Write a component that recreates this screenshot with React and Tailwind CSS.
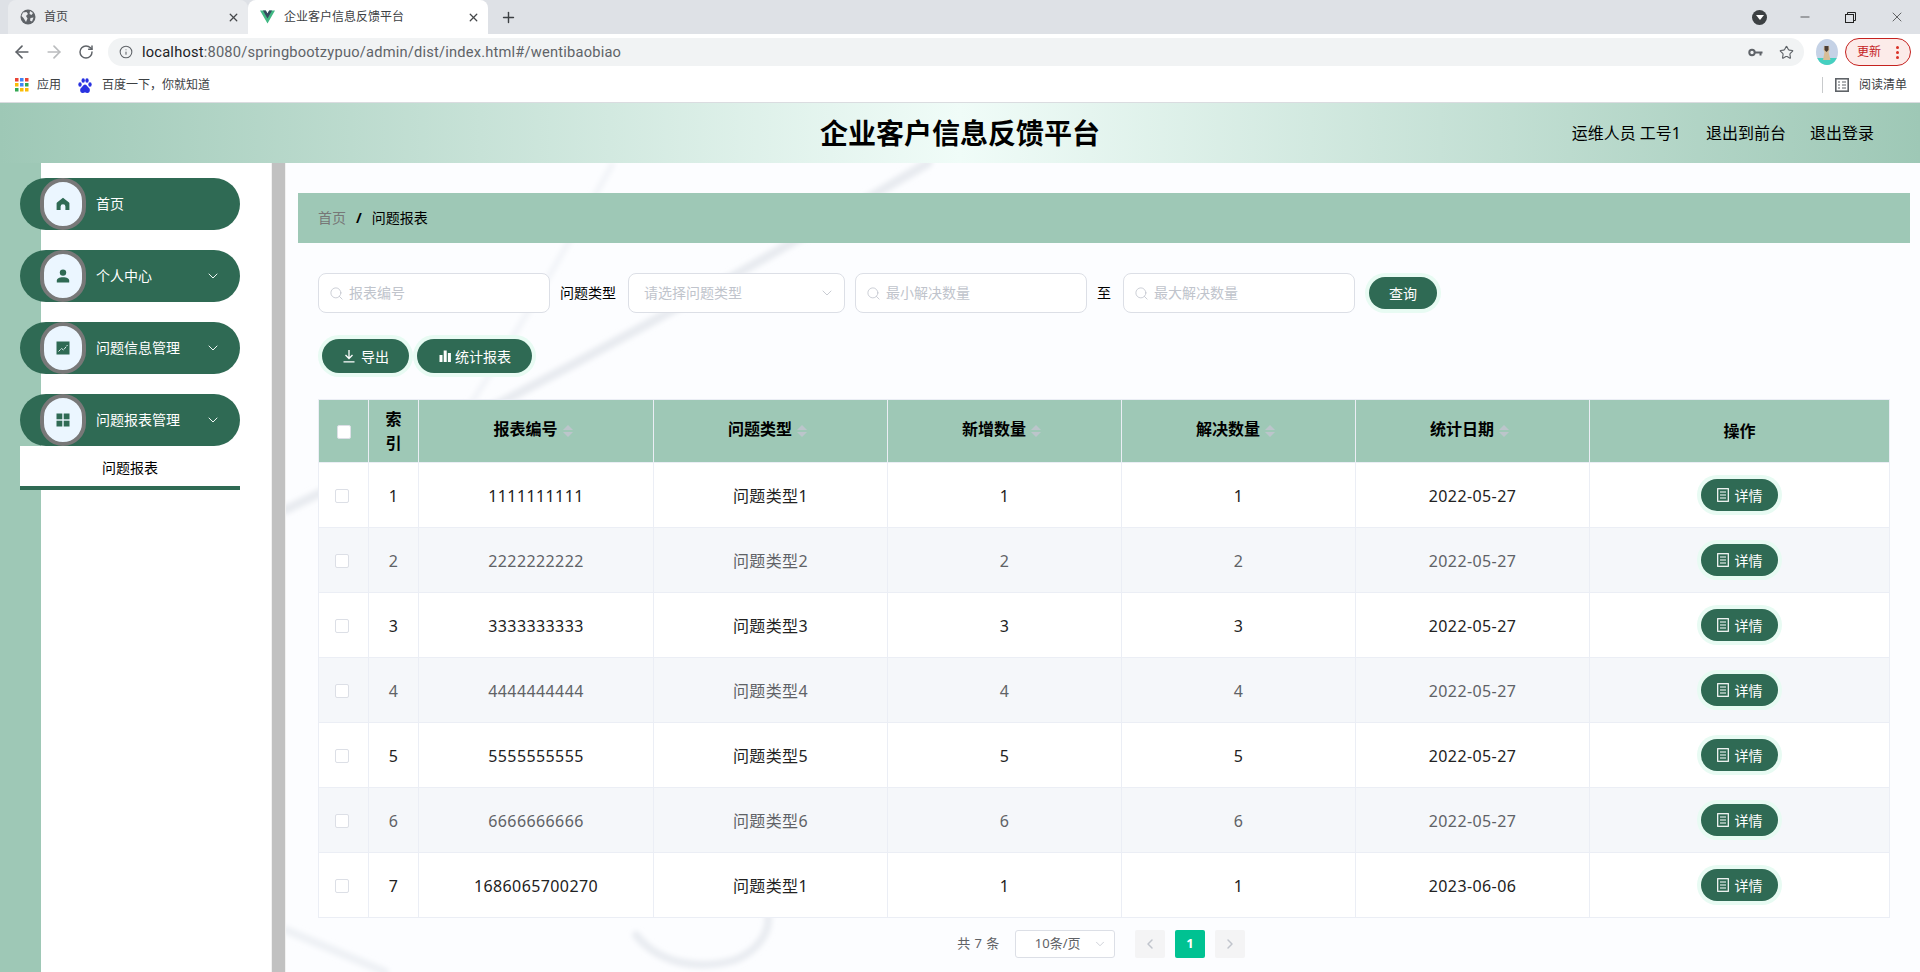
import React from "react";
import { ArrowLeft, ArrowRight, RotateCw, Info, Star, ChevronDown, ChevronLeft, ChevronRight, Search, X, Plus, Minus } from "lucide-react";

const rows = [
  ["1", "1111111111", "问题类型1", "1", "1", "2022-05-27"],
  ["2", "2222222222", "问题类型2", "2", "2", "2022-05-27"],
  ["3", "3333333333", "问题类型3", "3", "3", "2022-05-27"],
  ["4", "4444444444", "问题类型4", "4", "4", "2022-05-27"],
  ["5", "5555555555", "问题类型5", "5", "5", "2022-05-27"],
  ["6", "6666666666", "问题类型6", "6", "6", "2022-05-27"],
  ["7", "1686065700270", "问题类型1", "1", "1", "2023-06-06"],
];

const HomeIcon = () => (
  <svg width="14" height="14" viewBox="0 0 14 14" fill="#2f6a54"><path d="M7 .8 1 5.4a1.2 1.2 0 0 0-.4.9V13h4V9.6a2.4 2.4 0 0 1 4.8 0V13h4V6.3a1.2 1.2 0 0 0-.4-.9z" /></svg>
);
const UserIcon = () => (
  <svg width="14" height="14" viewBox="0 0 14 14" fill="#2f6a54"><circle cx="7" cy="3.6" r="3.2" /><path d="M.8 13.6v-1.8C.8 9.6 3 8.2 7 8.2s6.200 1.400 6.200 3.600v1.800z" /></svg>
);
const ChartIcon = () => (
  <svg width="14" height="14" viewBox="0 0 14 14"><rect x=".5" y=".5" width="13" height="13" fill="#2f6a54" /><path d="M2.500 10.500 5.500 7.500 7.500 9 11.500 4" fill="none" stroke="#dfeef0" strokeWidth="1" strokeDasharray="3 .8" /></svg>
);
const GridIcon = () => (
  <svg width="14" height="14" viewBox="0 0 14 14" fill="#2f6a54"><rect x=".5" y=".5" width="5.800" height="5.800" /><rect x="7.700" y=".5" width="5.800" height="5.800" /><rect x=".5" y="7.700" width="5.800" height="5.800" /><rect x="7.700" y="7.700" width="5.800" height="5.800" /></svg>
);
const DocIcon = () => (
  <svg width="12" height="14" viewBox="0 0 12 14" fill="none" stroke="white" strokeWidth="1.200"><rect x=".7" y=".7" width="10.600" height="12.600" /><path d="M3 4h6M3 7h6M3 10h6" /></svg>
);
const DownloadIcon = () => (
  <svg width="14" height="14" viewBox="0 0 14 14" fill="none" stroke="white" strokeWidth="1.300"><path d="M7 1v8.500M3.500 6 7 9.500 10.500 6M1.500 12.800h11" /></svg>
);
const BarsIcon = () => (
  <svg width="14" height="14" viewBox="0 0 14 14" fill="white"><rect x="1.500" y="6" width="3" height="7" /><rect x="5.700" y="1.500" width="3" height="11.500" /><rect x="9.900" y="4" width="3" height="9" /></svg>
);
const Globe = () => (
  <svg width="16" height="16" viewBox="0 0 16 16"><circle cx="8" cy="8" r="7.500" fill="#5f6368" /><path d="M3 3.500 6.500 3 8 5 6 7 7.500 9.500 6 13 3.500 9 1.500 7zM10 2l3 2-1.500 2-2-1zM10.500 9l3-.5-1.500 4-2-1z" fill="#e9ebee" /></svg>
);
const Vue = () => (
  <svg width="15" height="14" viewBox="0 0 256 221"><path d="M204.800 0H256L128 220.800 0 0h97.900L128 51.200 157.400 0z" fill="#41b883" /><path d="M50 0 128 134.400 205.800 0h-48.400L128 51.200 97.900 0z" fill="#34495e" /></svg>
);
const Apps = () => (
  <svg width="14" height="14" viewBox="0 0 14 14">
    {[["#ea4335", 0, 0], ["#4285f4", 5, 0], ["#ea4335", 10, 0], ["#fbbc05", 0, 5], ["#4285f4", 5, 5], ["#34a853", 10, 5], ["#34a853", 0, 10], ["#fbbc05", 5, 10], ["#fbbc05", 10, 10]].map(([c, x, y], i) => (
      <rect key={i} x={x} y={y} width="3.500" height="3.500" fill={c} />
    ))}
  </svg>
);
const Paw = () => (
  <svg width="14" height="16" viewBox="0 0 14 16" fill="#2932e1"><ellipse cx="2" cy="6.500" rx="1.700" ry="2.200" /><ellipse cx="5.200" cy="2.500" rx="1.700" ry="2.300" /><ellipse cx="9" cy="2.500" rx="1.700" ry="2.300" /><ellipse cx="12" cy="6.500" rx="1.700" ry="2.200" /><path d="M7 6.500c-2 0-2.500 2.500-4 3.500-1.500 1.200-1 5 1.500 5 1 0 1.500-.5 2.500-.5s1.500.5 2.500.5c2.500 0 3-3.800 1.500-5-1.500-1-2-3.500-4-3.500z" /></svg>
);
const Reader = () => (
  <svg width="14" height="14" viewBox="0 0 14 14" fill="none" stroke="#5f6368"><rect x=".8" y=".8" width="12.400" height="12.400" strokeWidth="1.600" /><path d="M3 4h2M7 4h4M3 7h2M7 7h4M3 10h2M7 10h4" strokeWidth="1.200" /></svg>
);
const Key = () => (
  <svg width="15" height="9" viewBox="0 0 15 9" fill="none"><circle cx="4" cy="4.500" r="2.700" stroke="#5f6368" strokeWidth="2" /><path d="M6.500 3.500H14.500V5.500H13.500V7.500H11.500V5.500H6.500z" fill="#5f6368" /></svg>
);
const Cat = () => (
  <svg width="22" height="26" viewBox="0 0 22 26"><defs><clipPath id="av"><ellipse cx="11" cy="13" rx="11" ry="13" /></clipPath></defs><g clipPath="url(#av)"><rect width="22" height="26" fill="#c5d2e6" /><rect y="19" width="22" height="7" fill="#45d0c0" /><path d="M8 6l1 2h3l1-2 .5 5-1 2 2 8H7l1.500-8-1-2z" fill="#d8bd96" /><path d="M8.500 7h4v4l-2 2-2-2z" fill="#4a3d35" /></g></svg>
);
const Caret = () => (
  <span className="inline-flex flex-col gap-[2px] ml-[5px] align-middle">
    <span className="w-0 h-0 border-x-[5px] border-x-transparent border-b-[5px] border-b-[#bcc5cb]" />
    <span className="w-0 h-0 border-x-[5px] border-x-transparent border-t-[5px] border-t-[#bcc5cb]" />
  </span>
);
const Ring = "bg-[#2f6a54] text-white rounded-full shadow-[0_0_0_4px_#e8fbf3] flex items-center justify-center";

const Tab = ({ icon, title, active }) => (
  <div className={`h-[34px] w-[240px] rounded-t-[8px] flex items-center pl-[12px] pr-[8px] text-[12px] ${active ? "bg-white text-[#3c4043]" : "bg-[#e9ebee] text-[#45474a]"}`}>
    <span className="w-[24px] flex items-center">{icon}</span>
    <span className="flex-1">{title}</span>
    <X size={13} strokeWidth={2.4} className="text-[#45474a]" />
  </div>
);

const SearchInput = ({ placeholder }) => (
  <div className="w-[232px] h-[40px] bg-white border border-[#dcdfe6] rounded-[8px] flex items-center pl-[10px] shrink-0">
    <Search size={15} strokeWidth={1.300} className="text-[#c0c4cc] shrink-0" />
    <input readOnly placeholder={placeholder} className="ml-[5px] mb-[2px] w-[190px] text-[14px] outline-none bg-transparent placeholder:text-[#c0c4cc]" />
  </div>
);

const MenuItem = ({ icon, label, arrow }) => (
  <div className="w-[220px] h-[52px] bg-[#2f6a54] rounded-full flex items-center text-white text-[14px]">
    <span className="ml-[20px] w-[46px] h-[52px] rounded-full border-4 border-[#787878] bg-[#ebf6ff] flex items-center justify-center shrink-0">{icon}</span>
    <span className="ml-[10px] mb-[2px] flex-1">{label}</span>
    {arrow && <ChevronDown size={16} strokeWidth={1.500} className="mr-[19px] text-[#f0f8f5]" />}
  </div>
);

export default function App() {
  return (
    <div className="w-[1920px] h-[972px] overflow-hidden flex flex-col bg-white text-black font-['Noto_Sans','Noto_Sans_CJK_SC',sans-serif]">
      {/* browser tabs */}
      <div className="h-[34px] bg-[#dee1e6] flex items-center pl-[8px] shrink-0">
        <Tab icon={<Globe />} title="首页" />
        <Tab active icon={<Vue />} title="企业客户信息反馈平台" />
        <Plus size={17} strokeWidth={2} className="ml-[12px] text-[#3c4043]" />
        <div className="ml-auto flex items-center text-[#222]">
          <span className="w-[15px] h-[15px] rounded-full bg-[#3c4043] flex items-center justify-center mr-[31px]">
            <span className="w-0 h-0 border-x-[4px] border-x-transparent border-t-[5px] border-t-white" />
          </span>
          <Minus size={14} strokeWidth={1.200} className="mr-[33px]" />
          <svg width="11" height="11" viewBox="0 0 11 11" fill="none" stroke="#222" className="mr-[33px]"><rect x=".5" y="2.500" width="8" height="8" /><path d="M2.500 2.500v-2h8v8h-2" /></svg>
          <X size={16} strokeWidth={1} className="mr-[15px]" />
        </div>
      </div>
      {/* toolbar */}
      <div className="h-[34px] pt-[2px] bg-white flex items-center shrink-0 text-[#5f6368]">
        <ArrowLeft size={20} strokeWidth={2} className="ml-[12px]" />
        <ArrowRight size={20} strokeWidth={2} className="ml-[12px] text-[#babcbe]" />
        <RotateCw size={16} strokeWidth={2.200} className="ml-[14px]" />
        <div className="ml-[14px] w-[1696px] h-[28px] rounded-full bg-[#f1f3f4] flex items-center">
          <Info size={14} strokeWidth={1.800} className="ml-[11px]" />
          <span className="ml-[9px] text-[14.67px] font-['Roboto',sans-serif] tracking-[0.2px]"><span className="text-[#202124]">localhost</span>:8080/springbootzypuo/admin/dist/index.html#/wentibaobiao</span>
          <span className="ml-auto mr-[16px]"><Key /></span>
          <Star size={15} strokeWidth={1.800} className="mr-[10px]" />
        </div>
        <span className="ml-[12px]"><Cat /></span>
        <div className="ml-[7px] w-[66px] h-[28px] rounded-full border border-[#c5221f] bg-[#fcebe9] text-[#c5221f] text-[12px] flex items-center pl-[11px]">
          更新
          <span className="ml-auto mr-[11px] flex flex-col gap-[2px]">
            <span className="w-[3px] h-[3px] rounded-full bg-[#d93025]" />
            <span className="w-[3px] h-[3px] rounded-full bg-[#d93025]" />
            <span className="w-[3px] h-[3px] rounded-full bg-[#d93025]" />
          </span>
        </div>
      </div>
      {/* bookmarks */}
      <div className="h-[35px] bg-white border-b border-[#dadce0] flex items-center pl-[15px] text-[12px] text-[#3c4043] shrink-0">
        <Apps />
        <span className="ml-[8px]">应用</span>
        <span className="ml-[17px] mt-[2px]"><Paw /></span>
        <span className="ml-[10px]">百度一下，你就知道</span>
        <span className="ml-auto w-px h-[16px] bg-[#c8cacc]" />
        <span className="ml-[12px]"><Reader /></span>
        <span className="ml-[10px] mr-[13px]">阅读清单</span>
      </div>
      {/* header */}
      <header className="relative h-[60px] shrink-0 bg-[linear-gradient(90deg,#9ec8b6,#f0fcf8_50%,#9ec8b6)] flex items-center justify-end">
        <h1 className="absolute left-[820px] top-[11px] text-[28px] leading-[38px] font-bold">企业客户信息反馈平台</h1>
        <span className="text-[16px] mr-[25px]">运维人员 工号1</span>
        <span className="text-[16px] mr-[24px]">退出到前台</span>
        <span className="text-[16px] mr-[46px]">退出登录</span>
      </header>
      {/* body */}
      <div className="flex flex-1 min-h-0">
        <aside className="w-[286px] shrink-0 flex bg-[linear-gradient(90deg,#9ec8b6_41px,white_41px)]">
          <nav className="w-[271px] pt-[15px] pl-[20px] flex flex-col gap-[20px]">
            <MenuItem icon={<HomeIcon />} label="首页" />
            <MenuItem icon={<UserIcon />} label="个人中心" arrow />
            <MenuItem icon={<ChartIcon />} label="问题信息管理" arrow />
            <div>
              <MenuItem icon={<GridIcon />} label="问题报表管理" arrow />
              <div className="w-[220px] h-[44px] pt-[2px] bg-white border-b-4 border-[#2f6a54] flex items-center justify-center text-[14px]">问题报表</div>
            </div>
          </nav>
          <div className="w-[15px] bg-[#f1f1f1] flex justify-center"><div className="w-[13px] bg-[#c1c1c1]" /></div>
        </aside>
        <main className="relative flex-1 min-w-0 bg-[#fcfdff] pt-[30px] pl-[12px] pr-[10px]">
          {/* faint background picture */}
          <svg className="absolute inset-0 pointer-events-none" width="1634" height="809" viewBox="286 163 1634 809" fill="none">
            <defs><filter id="bl"><feGaussianBlur stdDeviation="2.600" /></filter></defs>
            <g filter="url(#bl)" strokeLinecap="round">
              <path d="M928 163 C 830 220 600 360 285 510" stroke="#e8ebf0" strokeWidth="9" />
              <path d="M612 165 C 570 240 520 330 460 420" stroke="#f2f4f8" strokeWidth="6" />
              <path d="M636 935 C 660 965 700 970 735 960 C 760 950 770 930 768 915" stroke="#e9ecf1" strokeWidth="8" />
              <path d="M286 930 L 385 972" stroke="#eef1f5" strokeWidth="8" />
            </g>
          </svg>
          <div className="relative">
            <div className="h-[50px] pb-[2px] bg-[#9ec8b6] flex items-center pl-[20px] text-[14px]">
              <span className="text-[#777]">首页</span>
              <span className="mx-[10px] font-bold">/</span>
              <span>问题报表</span>
            </div>
            <div className="px-[20px]">
              <div className="mt-[30px] h-[40px] flex items-center text-[14px]">
                <SearchInput placeholder="报表编号" />
                <span className="ml-[10px] mb-[2px]">问题类型</span>
                <div className="ml-[12px] w-[217px] h-[40px] pb-[2px] bg-white border border-[#dcdfe6] rounded-[8px] flex items-center pl-[15px] text-[#c0c4cc]">
                  请选择问题类型
                  <ChevronDown size={16} strokeWidth={1.300} className="ml-auto mr-[9px] mt-[1px]" />
                </div>
                <div className="ml-[10px]"><SearchInput placeholder="最小解决数量" /></div>
                <span className="mx-[10px] w-[16px] mb-[2px]">至</span>
                <SearchInput placeholder="最大解决数量" />
                <button className={`ml-[14px] w-[68px] h-[32px] text-[14px] ${Ring}`}>查询</button>
              </div>
              <div className="mt-[26px] h-[34px] flex items-center text-[14px]">
                <button className={`ml-[4px] w-[87px] h-[34px] gap-[5px] ${Ring}`}><DownloadIcon />导出</button>
                <button className={`ml-[8px] w-[115px] h-[34px] gap-[3px] ${Ring}`}><BarsIcon />统计报表</button>
              </div>
              <table className="mt-[26px] w-[1572px] table-fixed border-collapse text-[16px] text-center">
                <colgroup>
                  <col className="w-[50px]" /><col className="w-[50px]" /><col className="w-[235px]" /><col className="w-[234px]" /><col className="w-[234px]" /><col className="w-[234px]" /><col className="w-[234px]" /><col />
                </colgroup>
                <thead>
                  <tr className="h-[63px] bg-[#9ec8b6] font-bold">
                    <th className="border border-[#ebeef5] pt-[1px]">
                      <span className="block mx-auto w-[14px] h-[14px] bg-white border border-[#dcdfe6] rounded-[2px]" />
                    </th>
                    <th className="border border-[#ebeef5] leading-[24px]"><span className="block w-[16px] mx-auto">索引</span></th>
                    {["报表编号", "问题类型", "新增数量", "解决数量", "统计日期"].map((t) => (
                      <th key={t} className="border border-[#ebeef5] pr-[6px] pb-[4px]">{t}<Caret /></th>
                    ))}
                    <th className="border border-[#ebeef5]">操作</th>
                  </tr>
                </thead>
                <tbody className="tracking-[0.4px]">
                  {rows.map((r, i) => (
                    <tr key={r[0]} className={`h-[65px] ${i % 2 ? "bg-[#f5f7fa] text-[#606266]" : "bg-white text-[#222]"}`}>
                      <td className="border border-[#ebeef5] pt-[2px] pr-[3px]"><span className="block mx-auto w-[14px] h-[14px] bg-white border border-[#dcdfe6] rounded-[2px]" /></td>
                      {r.map((c, j) => (
                        <td key={j} className="border border-[#ebeef5] pt-[2px]">{c}</td>
                      ))}
                      <td className="border border-[#ebeef5]">
                        <button className={`mx-auto w-[77px] h-[32px] gap-[6px] text-[14px] tracking-normal ${Ring}`}><DocIcon />详情</button>
                      </td>
                    </tr>
                  ))}
                </tbody>
              </table>
              <div className="mt-[12px] flex items-center justify-center pr-[6px] text-[13px] text-[#606266]">
                <span className="tracking-[0.5px]">共 7 条</span>
                <div className="ml-[15px] w-[100px] h-[28px] bg-white border border-[#dcdfe6] rounded-[3px] flex items-center pl-[19px]">
                  10条/页
                  <ChevronDown size={14} strokeWidth={1.300} className="ml-auto mr-[7px] text-[#c0c4cc]" />
                </div>
                <span className="ml-[20px] w-[30px] h-[28px] bg-[#f4f4f5] rounded-[2px] flex items-center justify-center text-[#c0c4cc]"><ChevronLeft size={16} strokeWidth={2.200} /></span>
                <span className="ml-[10px] w-[30px] h-[28px] bg-[#00c292] rounded-[2px] flex items-center justify-center text-white font-bold">1</span>
                <span className="ml-[10px] w-[30px] h-[28px] bg-[#f4f4f5] rounded-[2px] flex items-center justify-center text-[#c0c4cc]"><ChevronRight size={16} strokeWidth={2.200} /></span>
              </div>
            </div>
          </div>
        </main>
      </div>
    </div>
  );
}
